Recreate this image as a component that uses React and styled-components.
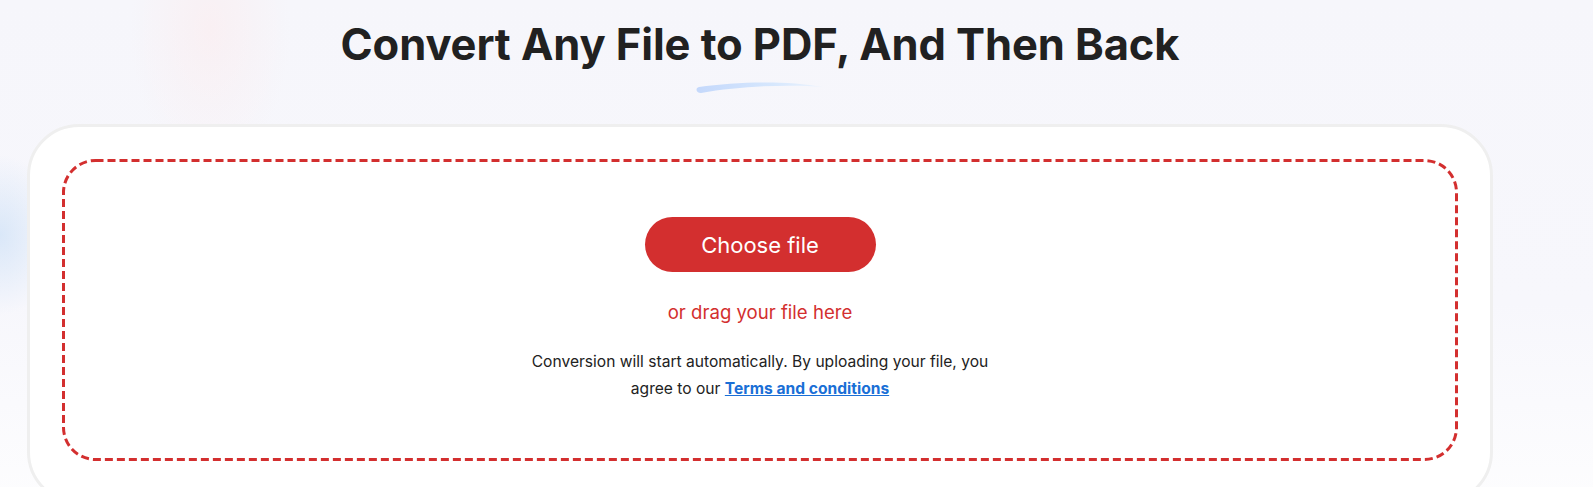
import React from 'react';
import styled, { createGlobalStyle } from 'styled-components';

const GlobalStyle = createGlobalStyle`
    * { box-sizing: border-box; }
    body {
        margin: 0;
        font-family: Inter, Lato, "Open Sans", Arial, sans-serif;
        background: #f6f7fc;
    }
`;

const Page = styled.div`
    min-height: 487px;
    overflow: hidden;
    background:
        radial-gradient(ellipse 80px 140px at 210px 30px, rgba(255, 228, 228, 0.35), rgba(255, 228, 228, 0) 100%),
        radial-gradient(ellipse 60px 80px at 0px 235px, rgba(208, 226, 247, 0.75), rgba(208, 226, 247, 0) 100%),
        linear-gradient(180deg, #f6f6fb 0%, #f7f7fc 60%, #fdfdfe 100%);
`;

const Hero = styled.section`
    width: 1466px;
    margin-left: 27px;
    padding-top: 17px;
    display: flex;
    flex-direction: column;
    align-items: center;
`;

const Title = styled.h1`
    margin: 0;
    font-size: 43.5px;
    line-height: 54px;
    font-weight: 700;
    color: #212121;
    letter-spacing: -0.1px;
`;

const Swoosh = styled.svg`
    display: block;
    margin-top: 9px;
    width: 130px;
    height: 14px;
`;

const Card = styled.div`
    align-self: stretch;
    margin-top: 30px;
    background: #fff;
    border: 3px solid #efefef;
    border-radius: 52px;
    padding: 32px 32px 40px;
`;

const DropZone = styled.div`
    position: relative;
    height: 302px;
    padding-top: 58px;
    display: flex;
    flex-direction: column;
    align-items: center;
`;

const DashFrame = styled.svg`
    position: absolute;
    inset: 0;
    width: 100%;
    height: 100%;
    pointer-events: none;

    rect {
        x: 1.5px;
        y: 1.5px;
        width: calc(100% - 3px);
        height: calc(100% - 3px);
        rx: 32px;
        fill: none;
        stroke: #d32f2f;
        stroke-width: 3;
        stroke-dasharray: 8 4;
    }
`;

const ChooseButton = styled.button`
    width: 231px;
    height: 55px;
    border: none;
    border-radius: 28px;
    background: #d32f2f;
    color: #fff;
    font-family: inherit;
    font-size: 22px;
    font-weight: 400;
    cursor: pointer;
`;

const DragHint = styled.div`
    margin-top: 29px;
    font-size: 18.6px;
    line-height: 22px;
    color: #d32f2f;
`;

const Notice = styled.p`
    margin: 25px 0 0;
    width: 480px;
    text-align: center;
    font-size: 15.6px;
    line-height: 27px;
    color: #222;

    a {
        color: #1a6fd6;
        font-weight: 700;
        text-decoration: underline;
    }
`;

export default function App() {
    return (
        <Page>
            <GlobalStyle />
            <Hero>
                <Title>Convert Any File to PDF, And Then Back</Title>
                <Swoosh viewBox="0 0 130 14">
                    <defs>
                        <linearGradient id="sw" x1="0" x2="1" y1="0" y2="0">
                            <stop offset="0" stopColor="#c4d8fb" />
                            <stop offset="0.6" stopColor="#d6e7fd" />
                            <stop offset="1" stopColor="#eef4fd" />
                        </linearGradient>
                    </defs>
                    <path d="M4 7 C40 2 90 0 128 7 C95 4 45 6 6 13 C1 13 0 8 4 7 Z" fill="url(#sw)" />
                </Swoosh>
                <Card>
                    <DropZone>
                        <DashFrame><rect /></DashFrame>
                        <ChooseButton>Choose file</ChooseButton>
                        <DragHint>or drag your file here</DragHint>
                        <Notice>
                            Conversion will start automatically. By uploading your file, you agree to our <a href="#terms">Terms and conditions</a>
                        </Notice>
                    </DropZone>
                </Card>
            </Hero>
        </Page>
    );
}
